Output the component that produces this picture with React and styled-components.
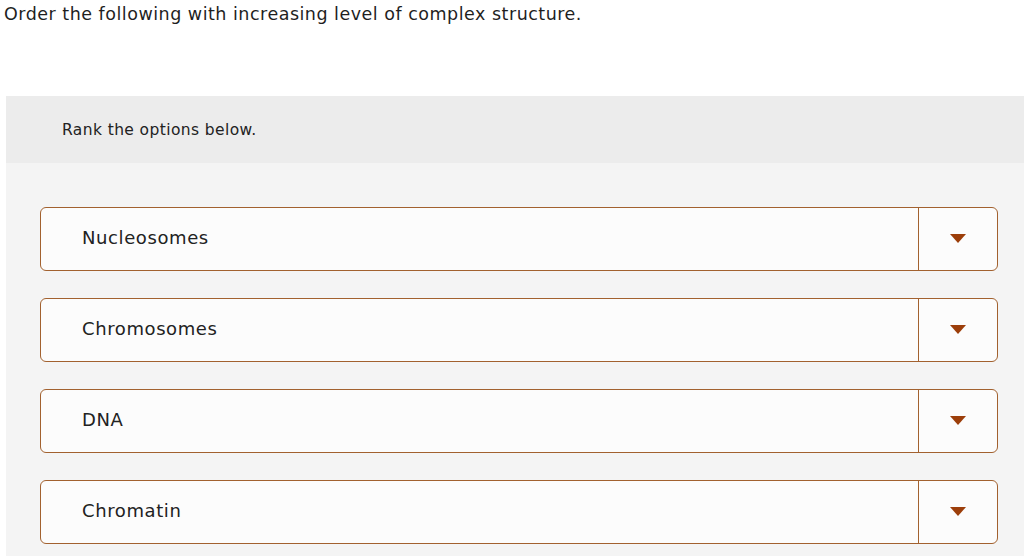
import React from "react";
import styled, { createGlobalStyle } from "styled-components";

const GlobalStyle = createGlobalStyle`
  html, body {
    margin: 0;
    padding: 0;
    background: #ffffff;
  }
  body {
    font-family: "DejaVu Sans", "Liberation Sans", sans-serif;
    color: #222222;
  }
`;

const Page = styled.div`
  width: 1024px;
  height: 556px;
  overflow: hidden;
`;

const Question = styled.div`
  font-size: 17.5px;
  letter-spacing: 0.5px;
  line-height: 24px;
  padding: 2px 0 0 4px;
  height: 94px;
  box-sizing: border-box;
  color: #1f1f1f;
`;

const Panel = styled.div`
  margin: 2px 0 0 6px;
  background: #f4f4f4;
  height: 460px;
`;

const PanelHeader = styled.div`
  background: #ececec;
  height: 67px;
  padding-left: 56px;
  display: flex;
  align-items: center;
  font-size: 15.5px;
  letter-spacing: 0.4px;
  color: #222222;
`;

const List = styled.div`
  display: flex;
  flex-direction: column;
  gap: 27px;
  padding: 44px 26px 0 34px;
`;

const Row = styled.div`
  display: flex;
  height: 64px;
  box-sizing: border-box;
  border: 1.5px solid #a2612f;
  border-radius: 6px;
  background: #fcfcfc;
`;

const Label = styled.div`
  flex: 1;
  display: flex;
  align-items: center;
  padding-left: 41px;
  padding-bottom: 3px;
  font-size: 18px;
  letter-spacing: 0.6px;
  color: #222222;
  border-right: 1.5px solid #a2612f;
`;

const Toggle = styled.div`
  width: 78px;
  display: flex;
  align-items: center;
  justify-content: center;
  padding-bottom: 2px;
`;

const Caret = () => (
  <svg width="16" height="9" viewBox="0 0 16 9">
    <path d="M0 0 H16 L8 9 Z" fill="#9c3e0a" />
  </svg>
);

const options = ["Nucleosomes", "Chromosomes", "DNA", "Chromatin"];

export default function App() {
  return (
    <Page>
      <GlobalStyle />
      <Question>Order the following with increasing level of complex structure.</Question>
      <Panel>
        <PanelHeader>Rank the options below.</PanelHeader>
        <List>
          {options.map((o) => (
            <Row key={o}>
              <Label>{o}</Label>
              <Toggle>
                <Caret />
              </Toggle>
            </Row>
          ))}
        </List>
      </Panel>
    </Page>
  );
}
